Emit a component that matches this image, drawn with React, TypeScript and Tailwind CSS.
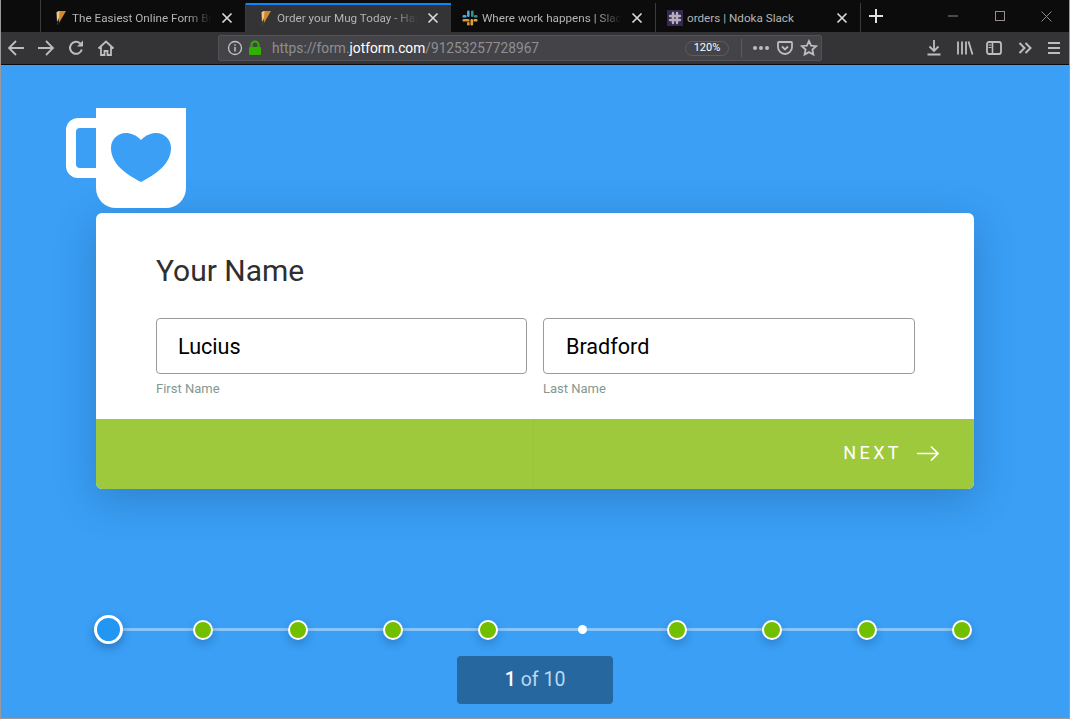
const steps = ["current", "done", "done", "done", "done", "empty", "done", "done", "done", "done"];

function Close({ className = "text-[#d8d8d8]" }: { className?: string }) {
  return (
    <svg width="12" height="12" viewBox="0 0 12 12" className={`shrink-0 ${className}`}>
      <path d="M1.5 1.5l9 9M10.5 1.5l-9 9" stroke="currentColor" strokeWidth="1.7" fill="none" />
    </svg>
  );
}

function JotIcon() {
  return (
    <svg width="11" height="16" viewBox="0 0 11 16" className="shrink-0">
      <path d="M3 1h8L4 13z" fill="#d08a2c" />
      <path d="M1.500 2L4.500 1 4 8 2 12z" fill="#e8c890" />
      <path d="M2 12l1.500 2-1 1z" fill="#555" />
    </svg>
  );
}

function SlackIcon() {
  return (
    <svg width="16" height="16" viewBox="0 0 16 16" className="shrink-0">
      <rect x="5" y="0.5" width="2.6" height="6.5" rx="1.200" fill="#4fa8e0" />
      <rect x="0.500" y="5" width="4" height="2.600" rx="1.200" fill="#4fa8e0" />
      <rect x="9" y="0.500" width="2.600" height="6.500" rx="1.200" fill="#3f8f86" />
      <rect x="12" y="5" width="3.500" height="2.600" rx="1.200" fill="#3f8f86" />
      <rect x="8.500" y="9" width="2.600" height="6.500" rx="1.200" fill="#e0a23c" />
      <rect x="11.500" y="9" width="4" height="2.600" rx="1.200" fill="#e0a23c" />
      <rect x="0.500" y="9" width="7" height="2.600" rx="1.200" fill="#d8953a" />
      <rect x="5" y="12" width="2.600" height="3.500" rx="1.200" fill="#d8953a" />
    </svg>
  );
}

function SlackMono() {
  return (
    <svg width="16" height="16" viewBox="0 0 16 16" className="shrink-0">
      <rect width="16" height="16" fill="#37284f" />
      <path d="M6 3v10M10 3v10M3 6h10M3 10h10" stroke="#b5adbd" strokeWidth="2.400" strokeLinecap="round" />
    </svg>
  );
}

function Tab({ icon, title, active, fade }: { icon: React.ReactNode; title: string; active?: boolean; fade?: boolean }) {
  return (
    <div
      className={`relative flex h-full w-[205px] items-center pl-[7px] pr-[12px] ${
        active ? "bg-[#343437]" : "border-r border-[#3c3c3c]"
      }`}
    >
      {active && <div className="absolute inset-x-0 top-[0px] h-[2px] bg-[#0a84ff]" />}
      <div className="flex w-[24px] shrink-0 justify-center">{icon}</div>
      <div
        className={`min-w-0 flex-1 overflow-hidden whitespace-nowrap pt-[2px] text-[11.700px] text-[#b4b4b4] ${
          fade ? "[mask-image:linear-gradient(to_right,black_80%,transparent_97%)]" : ""
        }`}
      >
        {title}
      </div>
      <Close className="ml-[5px] text-[#d8d8d8]" />
    </div>
  );
}

function TabStrip() {
  return (
    <div className="flex h-[32px] shrink-0 bg-[#0c0c0d]">
      <div className="h-full w-[40px] border-r border-[#3c3c3c]" />
      <div className="flex h-full items-stretch pt-[3px]">
        <Tab icon={<JotIcon />} title="The Easiest Online Form Builder" fade />
        <Tab icon={<JotIcon />} title="Order your Mug Today - Hair" active fade />
        <Tab icon={<SlackIcon />} title="Where work happens | Slack" fade />
        <Tab icon={<SlackMono />} title="orders | Ndoka Slack" />
      </div>
      <div className="flex w-[30px] items-center justify-center text-[#e0e0e0]">
        <svg width="16" height="16" viewBox="0 0 16 16">
          <path d="M8 1v14M1 8h14" stroke="currentColor" strokeWidth="2" />
        </svg>
      </div>
      <div className="ml-auto flex h-full items-center pr-[17px] text-[#8c8c8c]">
        <svg width="12" height="12" viewBox="0 0 12 12" className="mr-[36px]">
          <path d="M1 6h10" stroke="currentColor" />
        </svg>
        <div className="mr-[36px] h-[10px] w-[10px] border border-[#9a8c8c]" />
        <svg width="11" height="11" viewBox="0 0 11 11">
          <path d="M0.5 0.5l10 10M10.5 0.5l-10 10" stroke="currentColor" />
        </svg>
      </div>
    </div>
  );
}

function NavIcon({ children, w = 18, className = "" }: { children: React.ReactNode; w?: number; className?: string }) {
  return (
    <svg
      width={w}
      height="18"
      viewBox={`0 0 ${w} 18`}
      fill="none"
      stroke="currentColor"
      strokeWidth="1.800"
      className={`shrink-0 ${className}`}
    >
      {children}
    </svg>
  );
}

function NavBar() {
  return (
    <div className="flex h-[33px] shrink-0 items-center border-b border-[#0c0c0d] bg-[#343437] text-[#bdbdbf]">
      <div className="flex w-[217px] shrink-0 items-center pl-[6px]">
        <NavIcon>
          <path d="M17 9H2M9 2L2 9l7 7" />
        </NavIcon>
        <NavIcon className="ml-[12px]">
          <path d="M1 9h15M9 2l7 7-7 7" />
        </NavIcon>
        <NavIcon w={16} className="ml-[13px]">
          <path d="M13.800 10.500a6 6 0 1 1-1.600-6" strokeWidth="2" />
          <path d="M15 1.500v6h-6z" fill="currentColor" stroke="none" />
        </NavIcon>
        <NavIcon className="ml-[13px]">
          <path d="M1.500 9.500L9 2.500l7.500 7M4 8v8h3.500v-4h3v4H14V8" strokeWidth="1.800" />
        </NavIcon>
      </div>
      <div className="flex h-[26px] w-[604px] items-center rounded-[2px] border border-[#525256] bg-[#444448]">
        <svg width="16" height="16" viewBox="0 0 16 16" fill="none" className="ml-[8px] shrink-0 text-[#c4c4c6]">
          <circle cx="8" cy="8" r="6.500" stroke="currentColor" strokeWidth="1.300" />
          <path d="M8 7v4.500M8 4.200v1.500" stroke="currentColor" strokeWidth="1.500" />
        </svg>
        <svg width="14" height="16" viewBox="0 0 14 16" fill="none" className="ml-[5px] shrink-0">
          <path d="M3.500 7V5a3.500 3.500 0 0 1 7 0v2" stroke="#30b000" strokeWidth="2" />
          <rect x="1" y="7" width="12" height="8" rx="1" fill="#30b000" />
        </svg>
        <div className="ml-[10px] whitespace-nowrap font-['Roboto',sans-serif] text-[13.750px] text-[#8f8f93]">
          https://form.<span className="text-white">jotform.com</span>/91253257728967
        </div>
        <div className="ml-auto flex h-[15px] w-[44px] items-center justify-center rounded-full border border-[#5c5c61] font-['Roboto',sans-serif] text-[11px] text-white">
          120%
        </div>
        <div className="ml-[12px] h-[18px] w-px bg-[#5c5c61]" />
        <div className="ml-[11px] flex gap-[2px]">
          <span className="h-[4px] w-[4px] rounded-full bg-[#bdbdbf]" />
          <span className="h-[4px] w-[4px] rounded-full bg-[#bdbdbf]" />
          <span className="h-[4px] w-[4px] rounded-full bg-[#bdbdbf]" />
        </div>
        <svg width="16" height="16" viewBox="0 0 16 16" fill="none" stroke="#bdbdbf" strokeWidth="1.800" className="ml-[8px] shrink-0">
          <path d="M2 2h12a1 1 0 0 1 1 1v4a7 7 0 0 1-14 0V3a1 1 0 0 1 1-1z" />
          <path d="M5 6.500l3 3 3-3" />
        </svg>
        <svg width="18" height="18" viewBox="0 0 18 18" fill="none" stroke="#bdbdbf" strokeWidth="1.800" className="ml-[7px] mr-[3px] shrink-0">
          <path d="M9 2l2.100 4.600 5 .6-3.700 3.400 1 5L9 13.100l-4.400 2.500 1-5L1.900 7.200l5-.6z" />
        </svg>
      </div>
      <div className="ml-auto flex items-center pr-[8px]">
        <NavIcon w={16}>
          <path d="M8 1v11M3.500 7.500L8 12l4.500-4.500M1.500 15.500h13" />
        </NavIcon>
        <NavIcon className="ml-[14px]">
          <path d="M2 2.500v13M6 2.500v13M10 2.500v13M12.500 2.500l4 13" strokeWidth="1.800" />
        </NavIcon>
        <NavIcon w={16} className="ml-[12px]">
          <rect x="1" y="3" width="14" height="12" rx="2" strokeWidth="1.800" />
          <path d="M6.500 3v12" strokeWidth="1.600" />
          <path d="M2.500 6h3M2.500 8.500h3" strokeWidth="1.200" />
        </NavIcon>
        <NavIcon w={14} className="ml-[16px]">
          <path d="M1.500 4l5 5-5 5M7.500 4l5 5-5 5" strokeWidth="2" />
        </NavIcon>
        <NavIcon w={14} className="ml-[15px]">
          <path d="M1 4h12M1 9h12M1 14h12" strokeWidth="2" />
        </NavIcon>
      </div>
    </div>
  );
}

function Mug() {
  return (
    <svg width="120" height="100" viewBox="0 0 120 100" className="ml-[65px] block shrink-0">
      <path
        d="M30 10H12A12 12 0 0 0 0 22v36a12 12 0 0 0 12 12h18V60H14a4 4 0 0 1-4-4V24a4 4 0 0 1 4-4h16z"
        fill="#fff"
      />
      <path d="M30 0h90v80a20 20 0 0 1-20 20H50a20 20 0 0 1-20-20z" fill="#fff" />
      <path
        d="M75 32C70 27 65 25 60 25c-9 0-15 7-15 15 0 17 17 27 30 34 13-7 30-17 30-34 0-8-6-15-15-15-5 0-10 2-15 7z"
        fill="#3a9ff5"
      />
    </svg>
  );
}

function Field({ value, label, className, pad }: { value: string; label: string; className: string; pad: string }) {
  return (
    <div className={className}>
      <div className={`flex h-[56px] items-center rounded-[4px] border border-[#9b9b9b] pt-[3px] text-[21.600px] text-black ${pad}`}>
        {value}
      </div>
      <div className="mt-[7px] text-[13px] leading-[15px] text-[#84988f]">{label}</div>
    </div>
  );
}

function Card() {
  return (
    <div className="mx-[95px] mt-[5px] overflow-hidden rounded-[6px] bg-white shadow-[0_10px_40px_rgba(20,60,110,0.3)]">
      <div className="h-[206px] pl-[60px] pr-[59px] pt-[38px]">
        <div className="text-[30px] leading-[40px] text-[#2f2f2f]">Your Name</div>
        <div className="mt-[27px] flex gap-[16px]">
          <Field value="Lucius" label="First Name" className="w-[371px]" pad="pl-[21px]" />
          <Field value="Bradford" label="Last Name" className="flex-1" pad="pl-[22px]" />
        </div>
      </div>
      <div className="flex h-[70px] bg-[#9fc93c]">
        <div className="w-[438px] border-r border-[#9ac338]" />
        <div className="flex flex-1 items-center justify-end pb-[3px] pr-[35px] text-white">
          <span className="text-[18px] tracking-[3.400px]">NEXT</span>
          <svg width="22" height="16" viewBox="0 0 22 16" fill="none" stroke="currentColor" strokeWidth="1.700" className="ml-[15px]">
            <path d="M0 8.500h21M14 1.500l7 7-7 7" />
          </svg>
        </div>
      </div>
    </div>
  );
}

function Stepper() {
  return (
    <div className="relative mx-[93px] mt-[126px] flex h-[29px] items-center justify-between">
      <div className="absolute inset-x-[14px] top-[13px] h-[3px] bg-white/40" />
      {steps.map((s, i) => (
        <div key={i} className="relative flex w-[28px] justify-center">
          {s === "current" && (
            <div className="h-[29px] w-[29px] shrink-0 rounded-full border-[3px] border-white bg-[#2196f3] shadow-[0_4px_10px_rgba(20,60,110,0.4)]" />
          )}
          {s === "empty" && <div className="h-[9px] w-[9px] rounded-full bg-white" />}
          {s === "done" && (
            <div className="h-[20px] w-[20px] rounded-full border-2 border-white bg-[#72bf00] shadow-[0_4px_8px_rgba(20,60,110,0.3)]" />
          )}
        </div>
      ))}
    </div>
  );
}

export default function App() {
  return (
    <div className="flex h-[719px] w-[1070px] flex-col overflow-hidden border-x border-b border-[#9a9a9a] bg-[#3a9ff5] font-['Roboto',sans-serif]">
      <TabStrip />
      <NavBar />
      <div className="pt-[43px]">
        <Mug />
        <Card />
        <Stepper />
        <div className="mx-auto mt-[12px] flex h-[48px] w-[156px] items-center justify-center rounded-[4px] bg-[#27679f] text-[19.500px] text-[#bcd8ee]">
          <span className="mr-[5px] font-medium text-white">1</span>of 10
        </div>
      </div>
    </div>
  );
}
